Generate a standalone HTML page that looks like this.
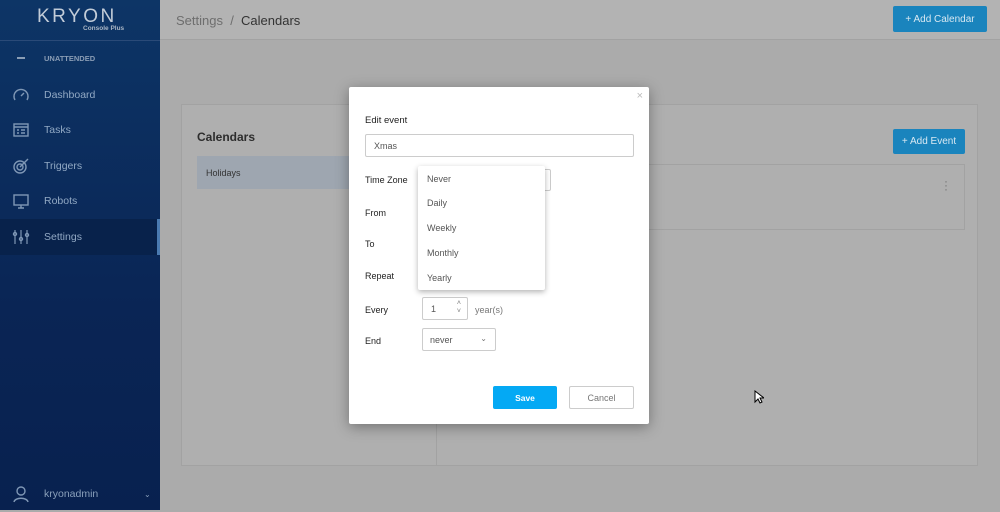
<!DOCTYPE html>
<html><head><meta charset="utf-8"><style>
*{box-sizing:border-box;margin:0;padding:0}
body{width:1000px;height:510px;overflow:hidden;font-family:"Liberation Sans",sans-serif;background:#ababab;position:relative}
.sb{position:absolute;left:0;top:0;width:160px;height:510px;background:linear-gradient(#0d3566,#0a2555 60%,#08214f)}
.logo{position:absolute;left:37px;top:6px;color:#c2ccd8;font-size:19px;letter-spacing:2.5px}
.logo small{position:absolute;left:46px;top:19px;font-size:6.5px;letter-spacing:0;font-weight:bold;color:#aab6c4;white-space:nowrap}
.sep{position:absolute;left:0;top:40px;width:160px;height:1px;background:#2a4a78}
.nav{position:absolute;left:0;width:160px;height:36px;color:#92a9c4;font-size:10.5px;display:flex;align-items:center;padding-left:44px}
.nav svg{position:absolute;left:12px;top:9px}
.hdr{position:absolute;left:160px;top:0;width:840px;height:40px;background:#b3b3b3;border-bottom:1px solid #a2a2a2}
.bc{position:absolute;left:16px;top:13px;font-size:13px;color:#6e6e6e}
.bc b{font-weight:normal;color:#333}
.btn{position:absolute;background:#1a84bd;color:#d8e8f2;font-size:10px;display:flex;align-items:center;justify-content:center;border-radius:2px}
.card{position:absolute;left:181px;top:104px;width:797px;height:362px;background:#afafaf;border:1px solid #a2a2a2}
.modal{position:absolute;left:349px;top:87px;width:300px;height:337px;background:#fff;box-shadow:0 3px 14px rgba(0,0,0,.35);border-radius:2px}
.lbl{position:absolute;left:16px;font-size:9px;color:#222}
.inp{position:absolute;border:1px solid #ccc;border-radius:2px;background:#fff;font-size:9px;color:#555}
.dd{position:absolute;left:69px;top:79px;width:127px;height:124px;background:#fff;box-shadow:0 2px 6px rgba(0,0,0,.3);border-radius:2px}
.dd div{position:absolute;left:9px;font-size:9px;color:#555}
</style></head><body>
<div class="sb">
 <div class="logo">KRYON<small>Console Plus</small></div>
 <div class="sep"></div>
 <div class="nav" style="top:40px;font-size:7.5px;font-weight:bold;color:#8a9db5">UNATTENDED<span style="position:absolute;left:17px;top:17px;width:8px;height:1.5px;background:#8a9db5"></span></div>
 <div class="nav" style="top:77px"><svg width="18" height="18" viewBox="0 0 18 18" fill="none" stroke="#7f97b5" stroke-width="1.4"><path d="M3 14A7 7 0 1 1 15 14"/><path d="M9 10l3-3"/></svg>Dashboard</div>
 <div class="nav" style="top:112px"><svg width="18" height="18" viewBox="0 0 18 18" fill="none" stroke="#7f97b5" stroke-width="1.4"><rect x="2" y="3" width="14" height="12"/><path d="M2 6h14M5 9h2M9 9h4M5 12h2M9 12h4"/></svg>Tasks</div>
 <div class="nav" style="top:148px"><svg width="18" height="18" viewBox="0 0 18 18" fill="none" stroke="#7f97b5" stroke-width="1.4"><circle cx="8" cy="10" r="6"/><circle cx="8" cy="10" r="3"/><path d="M8 10l8-8"/></svg>Triggers</div>
 <div class="nav" style="top:183px"><svg width="18" height="18" viewBox="0 0 18 18" fill="none" stroke="#7f97b5" stroke-width="1.4"><rect x="2" y="3" width="14" height="10"/><path d="M6 16h6M9 13v3"/></svg>Robots</div>
 <div class="nav" style="top:219px;background:#08224b;border-right:3px solid #4a7ab0"><svg width="18" height="18" viewBox="0 0 18 18" fill="none" stroke="#7f97b5" stroke-width="1.2"><path d="M3 2v14M9 2v14M15 2v14"/><circle cx="3" cy="6" r="1.6"/><circle cx="9" cy="11" r="1.6"/><circle cx="15" cy="7" r="1.6"/></svg>Settings</div>
 <div class="nav" style="top:476px;color:#8aa0bb"><svg width="18" height="18" viewBox="0 0 18 18" fill="none" stroke="#7f97b5" stroke-width="1.4"><circle cx="9" cy="6" r="4"/><path d="M2 17c1-5 13-5 14 0"/></svg>kryonadmin<span style="position:absolute;left:144px;font-size:8px">⌄</span></div>
</div>
<div class="hdr"><div class="bc">Settings &nbsp;/ &nbsp;<b>Calendars</b></div></div>
<div class="btn" style="left:893px;top:6px;width:94px;height:26px">+ Add Calendar</div>
<div class="card">
 <div style="position:absolute;left:15px;top:25px;font-size:12px;font-weight:bold;color:#2d2d2d">Calendars</div>
 <div style="position:absolute;left:15px;top:51px;width:240px;height:33px;background:#9ea6b0;font-size:9px;color:#333;padding:12px 0 0 9px">Holidays</div>
 <div style="position:absolute;left:254px;top:0;width:1px;height:360px;background:#a2a2a2"></div>
 <div class="btn" style="left:711px;top:24px;width:72px;height:25px">+ Add Event</div>
 <div style="position:absolute;left:270px;top:59px;width:513px;height:66px;border:1px solid #a2a2a2"></div>
 <div style="position:absolute;left:762px;top:74px;color:#777;font-size:12px;line-height:4px">·<br>·<br>·</div>
</div>
<div class="modal">
 <div style="position:absolute;right:6px;top:3px;color:#bbb;font-size:11px">×</div>
 <div class="lbl" style="top:28px;font-size:9.5px">Edit event</div>
 <div class="inp" style="left:16px;top:47px;width:269px;height:23px;padding:6px 8px">Xmas</div>
 <div class="lbl" style="top:88px">Time Zone</div>
 <div class="inp" style="left:180px;top:82px;width:22px;height:22px"></div>
 <div class="lbl" style="top:121px">From</div>
 <div class="lbl" style="top:152px">To</div>
 <div class="lbl" style="top:184px">Repeat</div>
 <div class="lbl" style="top:218px">Every</div>
 <div class="inp" style="left:73px;top:210px;width:46px;height:23px;padding:6px 8px">1<span style="position:absolute;right:6px;top:2px;font-size:7px;line-height:8px;color:#777">˄<br>˅</span></div>
 <div class="lbl" style="left:126px;top:218px;color:#777">year(s)</div>
 <div class="lbl" style="top:249px">End</div>
 <div class="inp" style="left:73px;top:241px;width:74px;height:23px;padding:6px 7px">never<span style="position:absolute;right:8px;top:5px;font-size:8px;color:#777">⌄</span></div>
 <div class="btn" style="left:144px;top:299px;width:64px;height:23px;background:#04a9f4;color:#fff;font-weight:bold;font-size:8.5px">Save</div>
 <div class="inp" style="left:220px;top:299px;width:65px;height:23px;text-align:center;padding-top:6px;color:#777">Cancel</div>
 <div class="dd">
  <div style="top:8px">Never</div><div style="top:32px">Daily</div><div style="top:57px">Weekly</div><div style="top:82px">Monthly</div><div style="top:107px">Yearly</div>
 </div>
</div>
<svg style="position:absolute;left:754px;top:390px" width="10" height="14" viewBox="0 0 10 14"><path d="M1 1v11l3-3 2 4 2-1-2-4h4z" fill="#fff" stroke="#000" stroke-width="1"/></svg>
</body></html>
